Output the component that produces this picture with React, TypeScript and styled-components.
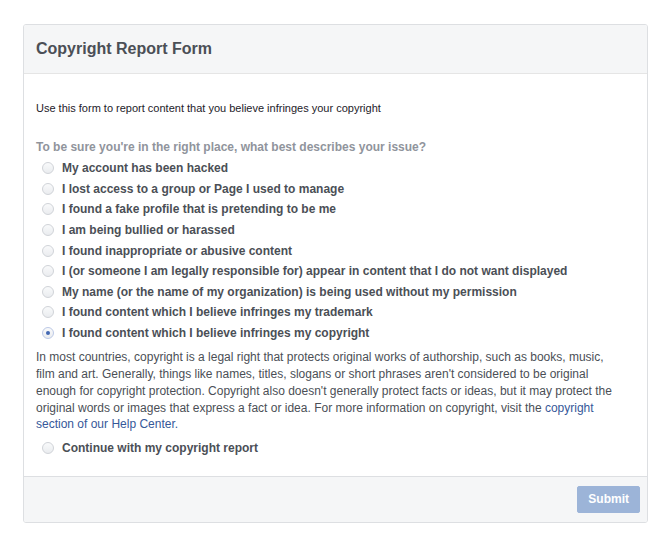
import React, { useState } from 'react';
import styled, { createGlobalStyle } from 'styled-components';

const GlobalStyle = createGlobalStyle`
  body {
    margin: 0;
    background: #fff;
    font-family: "Liberation Sans", Arial, Helvetica, sans-serif;
    color: #4b4f56;
  }
`;

const Page = styled.div`
  padding: 24px 23px 0 23px;
`;

const Card = styled.form`
  width: 625px;
  box-sizing: border-box;
  border: 1px solid #dddfe2;
  border-radius: 3px;
  background: #fff;
  overflow: hidden;
`;

const Header = styled.div`
  height: 48px;
  display: flex;
  align-items: center;
  padding: 0 12px;
  background: #f5f6f7;
  border-bottom: 1px solid #e5e5e5;
`;

const Title = styled.h2`
  margin: 0;
  font-size: 16px;
  font-weight: bold;
  color: #4b4f56;
`;

const Body = styled.div`
  padding: 27px 12px 17px 12px;
`;

const Intro = styled.p`
  margin: 0 0 25px 0;
  font-size: 11px;
  line-height: 14px;
  color: #1d2129;
`;

const Question = styled.div`
  font-size: 12px;
  line-height: 14px;
  font-weight: bold;
  color: #90949c;
  margin-bottom: 4px;
`;

const OptionRow = styled.label`
  display: flex;
  align-items: center;
  height: 20.6px;
  padding-left: 6px;
  gap: 8px;
  font-size: 12px;
  font-weight: bold;
  color: #4b4f56;
  cursor: pointer;
`;

const RadioCircle = styled.span<{ $checked: boolean }>`
  width: 12px;
  height: 12px;
  box-sizing: border-box;
  border-radius: 50%;
  border: 1px solid ${(p) => (p.$checked ? '#bcc9e6' : '#d0d3d8')};
  background: linear-gradient(#f9fafb, #eaecef);
  display: flex;
  align-items: center;
  justify-content: center;
  flex-shrink: 0;
  &::after {
    content: '';
    width: 4px;
    height: 4px;
    border-radius: 50%;
    background: ${(p) => (p.$checked ? '#4267b2' : 'transparent')};
  }
`;

const Paragraph = styled.p`
  margin: 6px 0 5px 0;
  font-size: 12px;
  line-height: 16.75px;
  color: #4b4f56;
`;

const Link = styled.a`
  color: #365899;
  text-decoration: none;
`;

const Footer = styled.div`
  display: flex;
  justify-content: flex-end;
  padding: 9px 7px 9px 12px;
  background: #f5f6f7;
  border-top: 1px solid #dddfe2;
`;

const SubmitButton = styled.button`
  height: 27px;
  padding: 0 10px;
  border: 1px solid #9cb4d8;
  border-radius: 2px;
  background: #9cb4d8;
  color: #fff;
  font-family: "Liberation Sans", Arial, sans-serif;
  font-size: 12px;
  font-weight: bold;
  cursor: not-allowed;
`;

const options = [
  'My account has been hacked',
  'I lost access to a group or Page I used to manage',
  'I found a fake profile that is pretending to be me',
  'I am being bullied or harassed',
  'I found inappropriate or abusive content',
  'I (or someone I am legally responsible for) appear in content that I do not want displayed',
  'My name (or the name of my organization) is being used without my permission',
  'I found content which I believe infringes my trademark',
  'I found content which I believe infringes my copyright',
];

const Radio = ({ checked, label, onSelect }: { checked: boolean; label: string; onSelect: () => void }) => (
  <OptionRow onClick={onSelect}>
    <RadioCircle $checked={checked} />
    {label}
  </OptionRow>
);

export default function App() {
  const [selected, setSelected] = useState(8);
  const [cont, setCont] = useState(false);

  return (
    <Page>
      <GlobalStyle />
      <Card onSubmit={(e) => e.preventDefault()}>
        <Header>
          <Title>Copyright Report Form</Title>
        </Header>
        <Body>
          <Intro>Use this form to report content that you believe infringes your copyright</Intro>
          <Question>To be sure you're in the right place, what best describes your issue?</Question>
          {options.map((o, i) => (
            <Radio key={o} label={o} checked={selected === i} onSelect={() => setSelected(i)} />
          ))}
          <Paragraph>
            In most countries, copyright is a legal right that protects original works of authorship, such as books, music,
            <br />
            film and art. Generally, things like names, titles, slogans or short phrases aren't considered to be original
            <br />
            enough for copyright protection. Copyright also doesn't generally protect facts or ideas, but it may protect the
            <br />
            original words or images that express a fact or idea. For more information on copyright, visit the{' '}
            <Link href="#">
              copyright
              <br />
              section of our Help Center.
            </Link>
          </Paragraph>
          <Radio label="Continue with my copyright report" checked={cont} onSelect={() => setCont(!cont)} />
        </Body>
        <Footer>
          <SubmitButton type="submit" disabled>
            Submit
          </SubmitButton>
        </Footer>
      </Card>
    </Page>
  );
}
